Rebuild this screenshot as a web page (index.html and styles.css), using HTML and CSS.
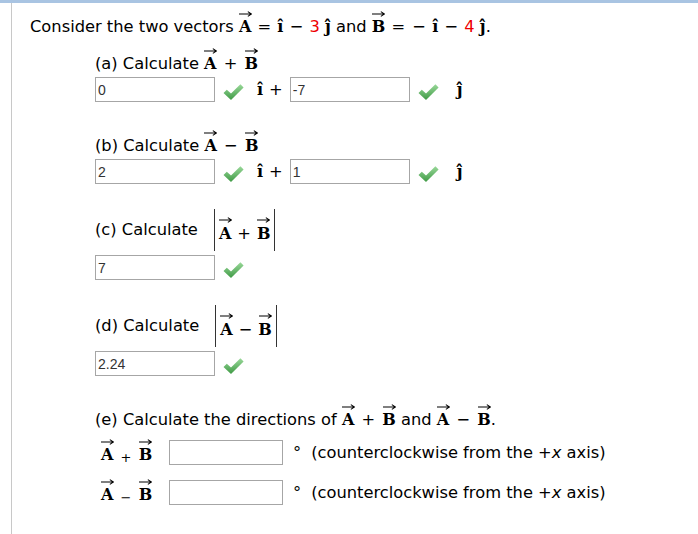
FILE: index.html
```html
<!DOCTYPE html>
<html lang="en">
<head>
  <meta charset="UTF-8" />
  <title>Vector Addition</title>
  <link rel="stylesheet" href="styles.css">
</head>
<body>
  <svg class="defs" width="0" height="0">
    <defs>
      <linearGradient id="green" x1="0" y1="0" x2="0" y2="1">
        <stop offset="0" stop-color="#9ad99a"/>
        <stop offset="1" stop-color="#3f9a45"/>
      </linearGradient>
    </defs>
  </svg>

  <div class="page">
    <p class="intro">
      Consider the two vectors <span class="vec"><svg class="arrow" viewBox="0 0 14 6"><path d="M0 3H12.5M9.5 0.5L13.5 3L9.5 5.5"/></svg><b>A</b></span>
      <span class="op">=</span> <b class="unit">î</b> <span class="op">−</span> <span class="num">3</span> <b class="unit">ĵ</b> and
      <span class="vec"><svg class="arrow" viewBox="0 0 14 6"><path d="M0 3H12.5M9.5 0.5L13.5 3L9.5 5.5"/></svg><b>B</b></span>
      <span class="op">=</span> <span class="op">−</span> <b class="unit">î</b> <span class="op">−</span> <span class="num">4</span> <b class="unit">ĵ</b>.
    </p>

    <div class="part">
      <div class="label">(a) Calculate
        <span class="vec"><svg class="arrow" viewBox="0 0 14 6"><path d="M0 3H12.5M9.5 0.5L13.5 3L9.5 5.5"/></svg><b>A</b></span>
        <span class="sym">+</span>
        <span class="vec"><svg class="arrow" viewBox="0 0 14 6"><path d="M0 3H12.5M9.5 0.5L13.5 3L9.5 5.5"/></svg><b>B</b></span>
      </div>
      <div class="answer">
        <input type="text" value="0">
        <svg class="check" viewBox="0 0 21 18"><path d="M0.5 10L3.8 6.8L8 10.6L17.4 1.2L20.6 4.4L8 17Z"/></svg>
        <b class="unit">î</b><span class="plus">+</span>
        <input type="text" value="-7">
        <svg class="check" viewBox="0 0 21 18"><path d="M0.5 10L3.8 6.8L8 10.6L17.4 1.2L20.6 4.4L8 17Z"/></svg>
        <b class="unit j">ĵ</b>
      </div>
    </div>

    <div class="part">
      <div class="label">(b) Calculate
        <span class="vec"><svg class="arrow" viewBox="0 0 14 6"><path d="M0 3H12.5M9.5 0.5L13.5 3L9.5 5.5"/></svg><b>A</b></span>
        <span class="sym">−</span>
        <span class="vec"><svg class="arrow" viewBox="0 0 14 6"><path d="M0 3H12.5M9.5 0.5L13.5 3L9.5 5.5"/></svg><b>B</b></span>
      </div>
      <div class="answer">
        <input type="text" value="2">
        <svg class="check" viewBox="0 0 21 18"><path d="M0.5 10L3.8 6.8L8 10.6L17.4 1.2L20.6 4.4L8 17Z"/></svg>
        <b class="unit">î</b><span class="plus">+</span>
        <input type="text" value="1">
        <svg class="check" viewBox="0 0 21 18"><path d="M0.5 10L3.8 6.8L8 10.6L17.4 1.2L20.6 4.4L8 17Z"/></svg>
        <b class="unit j">ĵ</b>
      </div>
    </div>

    <div class="part">
      <div class="label tall">(c) Calculate
        <span class="abs">
          <span class="vec"><svg class="arrow" viewBox="0 0 14 6"><path d="M0 3H12.5M9.5 0.5L13.5 3L9.5 5.5"/></svg><b>A</b></span>
          <span class="sym">+</span>
          <span class="vec"><svg class="arrow" viewBox="0 0 14 6"><path d="M0 3H12.5M9.5 0.5L13.5 3L9.5 5.5"/></svg><b>B</b></span>
        </span>
      </div>
      <div class="answer">
        <input type="text" value="7">
        <svg class="check" viewBox="0 0 21 18"><path d="M0.5 10L3.8 6.8L8 10.6L17.4 1.2L20.6 4.4L8 17Z"/></svg>
      </div>
    </div>

    <div class="part">
      <div class="label tall">(d) Calculate
        <span class="abs">
          <span class="vec"><svg class="arrow" viewBox="0 0 14 6"><path d="M0 3H12.5M9.5 0.5L13.5 3L9.5 5.5"/></svg><b>A</b></span>
          <span class="sym">−</span>
          <span class="vec"><svg class="arrow" viewBox="0 0 14 6"><path d="M0 3H12.5M9.5 0.5L13.5 3L9.5 5.5"/></svg><b>B</b></span>
        </span>
      </div>
      <div class="answer">
        <input type="text" value="2.24">
        <svg class="check" viewBox="0 0 21 18"><path d="M0.5 10L3.8 6.8L8 10.6L17.4 1.2L20.6 4.4L8 17Z"/></svg>
      </div>
    </div>

    <div class="part">
      <div class="label">(e) Calculate the directions of
        <span class="vec"><svg class="arrow" viewBox="0 0 14 6"><path d="M0 3H12.5M9.5 0.5L13.5 3L9.5 5.5"/></svg><b>A</b></span>
        <span class="sym">+</span>
        <span class="vec"><svg class="arrow" viewBox="0 0 14 6"><path d="M0 3H12.5M9.5 0.5L13.5 3L9.5 5.5"/></svg><b>B</b></span>
        and
        <span class="vec"><svg class="arrow" viewBox="0 0 14 6"><path d="M0 3H12.5M9.5 0.5L13.5 3L9.5 5.5"/></svg><b>A</b></span>
        <span class="sym">−</span>
        <span class="vec"><svg class="arrow" viewBox="0 0 14 6"><path d="M0 3H12.5M9.5 0.5L13.5 3L9.5 5.5"/></svg><b>B</b></span>.
      </div>
      <div class="dir">
        <span class="expr">
          <span class="vec"><svg class="arrow" viewBox="0 0 14 6"><path d="M0 3H12.5M9.5 0.5L13.5 3L9.5 5.5"/></svg><b>A</b></span>
          <span class="sym small">+</span>
          <span class="vec"><svg class="arrow" viewBox="0 0 14 6"><path d="M0 3H12.5M9.5 0.5L13.5 3L9.5 5.5"/></svg><b>B</b></span>
        </span>
        <input type="text" class="wide">
        <span class="deg">°</span>
        <span>(counterclockwise from the +<i>x</i> axis)</span>
      </div>
      <div class="dir second">
        <span class="expr">
          <span class="vec"><svg class="arrow" viewBox="0 0 14 6"><path d="M0 3H12.5M9.5 0.5L13.5 3L9.5 5.5"/></svg><b>A</b></span>
          <span class="sym small">−</span>
          <span class="vec"><svg class="arrow" viewBox="0 0 14 6"><path d="M0 3H12.5M9.5 0.5L13.5 3L9.5 5.5"/></svg><b>B</b></span>
        </span>
        <input type="text" class="wide">
        <span class="deg">°</span>
        <span>(counterclockwise from the +<i>x</i> axis)</span>
      </div>
    </div>
  </div>
</body>
</html>
```

FILE: styles.css
```css
html, body {
  height: 100%;
}
body {
  margin: 0;
  background: #fff;
  color: #000;
  font-family: 'DejaVu Sans', Verdana, sans-serif;
  font-size: 16.3px;
  border-top: 3px solid #a9c4e2;
  box-sizing: border-box;
}
.defs {
  position: absolute;
}
.page {
  margin-left: 11px;
  border-left: 1px solid #c8c8c8;
  min-height: 100%;
  padding: 8px 0 0 18px;
  box-sizing: border-box;
}
.intro {
  margin: 0 0 8px;
  line-height: 32px;
}
/* vector letter with arrow on top */
.vec {
  position: relative;
  display: inline-block;
  font-family: 'DejaVu Serif', 'Times New Roman', serif;
  font-size: 16px;
  line-height: 16px;
}
.arrow {
  position: absolute;
  left: 0;
  right: 0;
  margin: 0 auto;
  top: -8px;
  width: 13px;
  height: 6px;
  fill: none;
  stroke: #000;
  stroke-width: 1.1;
}
.abs .arrow {
  top: -9px;
}
.unit {
  font-family: 'DejaVu Serif', 'Times New Roman', serif;
  font-size: 16px;
}
.num {
  color: #e00;
}
.op {
  margin: 0 1px;
}
.sym {
  margin: 0 2px;
}
.part {
  margin-left: 65px;
  margin-bottom: 31px;
}
.label {
  line-height: 26px;
  height: 26px;
}
.label.tall {
  display: flex;
  align-items: center;
  height: 42px;
  margin-top: -6px;
}
.abs {
  display: flex;
  align-items: center;
  height: 42px;
  box-sizing: border-box;
  border-left: 1px solid #333;
  border-right: 1px solid #333;
  padding: 8px 4px 0 4px;
  margin-left: 16px;
}
.abs .sym {
  margin: 0 6px;
}
.answer {
  display: flex;
  align-items: center;
}
.label.tall + .answer {
  margin-top: 4px;
}
input {
  width: 120px;
  height: 25px;
  box-sizing: border-box;
  border: 1px solid #a6a6a6;
  padding: 0 2px;
  font-family: 'Liberation Sans', Arial, sans-serif;
  font-size: 14px;
  color: #333;
  margin: 0;
}
.check {
  width: 21px;
  height: 18px;
  fill: url(#green);
  margin: 5px 8px 0;
}
.check + .unit {
  margin-left: 5px;
}
.plus {
  margin: 0 7px 0 6px;
}
.unit.j {
  margin-left: 10px;
}
.dir {
  display: flex;
  align-items: center;
  margin-top: 7px;
}
.dir.second {
  margin-top: 15px;
}
.expr {
  width: 68px;
  padding-left: 6px;
  padding-top: 4px;
}
.small {
  font-size: 13px;
  position: relative;
  top: 2px;
}
input.wide {
  width: 114px;
}
.deg {
  margin: 0 10px 0 10px;
}
```
